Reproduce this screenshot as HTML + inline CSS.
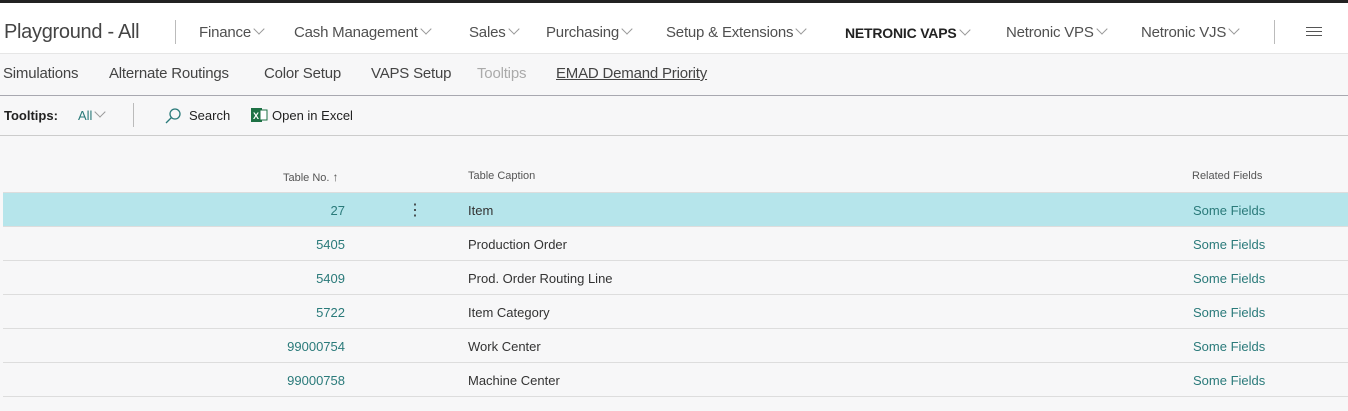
<!DOCTYPE html>
<html><head><style>
body{margin:0;width:1348px;height:411px;background:#f7f7f8;font-family:"Liberation Sans",sans-serif;position:relative;overflow:hidden;color:#333}
.a{position:absolute;white-space:nowrap}
.top{position:absolute;left:0;top:0;width:1348px;height:3px;background:#222}
.hdr{position:absolute;left:0;top:3px;width:1348px;height:50px;background:#fff;border-bottom:1px solid #e6e6e6}
.nav{font-size:15px;color:#505050;top:24px;letter-spacing:-0.2px}
.chev{display:inline-block;width:7px;height:7px;border-right:1px solid #999;border-bottom:1px solid #999;transform:rotate(45deg);margin-left:4px;position:relative;top:-4px}
.sub{font-size:15px;color:#444;top:65px;letter-spacing:-0.2px}
.tb{font-size:13px;top:108px;color:#222}
.hd{font-size:11px;color:#555;top:170px}
.row{position:absolute;left:3px;width:1345px;height:33px;border-bottom:1px solid #ddd}
.c{font-size:13px;position:absolute;top:10px}
.n{color:#2a7a7a;right:1003px;text-align:right}
.l{color:#2a7a7a;left:1190px}
</style></head><body>
<div class="top"></div>
<div class="hdr"></div>
<div class="a" style="left:4px;top:21px;font-size:20px;color:#444;letter-spacing:-0.3px">Playground - All</div>
<div class="a" style="left:175px;top:20px;width:1px;height:24px;background:#bbb"></div>
<div class="a nav" style="left:199px">Finance<span class="chev"></span></div>
<div class="a nav" style="left:294px">Cash Management<span class="chev"></span></div>
<div class="a nav" style="left:469px">Sales<span class="chev"></span></div>
<div class="a nav" style="left:546px">Purchasing<span class="chev"></span></div>
<div class="a nav" style="left:666px">Setup &amp; Extensions<span class="chev"></span></div>
<div class="a nav" style="left:845px;color:#222;font-weight:bold;font-size:14px;top:25px">NETRONIC VAPS<span class="chev"></span></div>
<div class="a nav" style="left:1006px">Netronic VPS<span class="chev"></span></div>
<div class="a nav" style="left:1141px">Netronic VJS<span class="chev"></span></div>
<div class="a" style="left:1274px;top:20px;width:1px;height:24px;background:#bbb"></div>
<div class="a" style="left:1306px;top:27px;width:16px;height:1px;background:#555;box-shadow:0 4px 0 #555,0 8px 0 #555"></div>
<div class="a sub" style="left:3px">Simulations</div>
<div class="a sub" style="left:109px">Alternate Routings</div>
<div class="a sub" style="left:264px">Color Setup</div>
<div class="a sub" style="left:371px">VAPS Setup</div>
<div class="a sub" style="left:477px;color:#aaa">Tooltips</div>
<div class="a sub" style="left:556px;text-decoration:underline">EMAD Demand Priority</div>
<div class="a" style="left:0;top:95px;width:1348px;height:1px;background:#a8a8b0"></div>
<div class="a tb" style="left:4px;font-weight:bold">Tooltips:</div>
<div class="a tb" style="left:78px;color:#2a7a7a">All<span class="chev"></span></div>
<div class="a" style="left:133px;top:103px;width:1px;height:24px;background:#bbb"></div>
<svg class="a" style="left:164px;top:107px" width="18" height="18" viewBox="0 0 18 18"><circle cx="11" cy="7" r="5" fill="none" stroke="#2a7a7a" stroke-width="1.3"/><line x1="7.5" y1="10.5" x2="2" y2="16" stroke="#2a7a7a" stroke-width="1.3"/></svg>
<div class="a tb" style="left:189px">Search</div>
<svg class="a" style="left:251px;top:107px" width="17" height="16"><rect x="0" y="1" width="11" height="14" fill="#1e7145"/><rect x="9" y="3" width="7" height="10" fill="#fff" stroke="#1e7145"/><text x="2" y="12" font-size="9" font-weight="bold" fill="#fff" font-family="Liberation Sans">X</text></svg>
<div class="a tb" style="left:272px">Open in Excel</div>
<div class="a" style="left:0;top:135px;width:1348px;height:1px;background:#ccc"></div>
<div class="a hd" style="left:283px">Table No. <span style="font-size:12px">↑</span></div>
<div class="a hd" style="left:468px">Table Caption</div>
<div class="a hd" style="left:1192px">Related Fields</div>
<div class="a" style="left:3px;top:192px;width:1345px;height:1px;background:#ddd"></div>
<div class="row" style="top:193px;background:#b6e5eb"><span class="c n" style="right:1003px">27</span><span class="c" style="left:404px;top:7px;font-size:16px">⋮</span><span class="c" style="left:465px">Item</span><span class="c l">Some Fields</span></div>
<div class="row" style="top:227px"><span class="c n">5405</span><span class="c" style="left:465px">Production Order</span><span class="c l">Some Fields</span></div>
<div class="row" style="top:261px"><span class="c n">5409</span><span class="c" style="left:465px">Prod. Order Routing Line</span><span class="c l">Some Fields</span></div>
<div class="row" style="top:295px"><span class="c n">5722</span><span class="c" style="left:465px">Item Category</span><span class="c l">Some Fields</span></div>
<div class="row" style="top:329px"><span class="c n">99000754</span><span class="c" style="left:465px">Work Center</span><span class="c l">Some Fields</span></div>
<div class="row" style="top:363px"><span class="c n">99000758</span><span class="c" style="left:465px">Machine Center</span><span class="c l">Some Fields</span></div>
</body></html>
